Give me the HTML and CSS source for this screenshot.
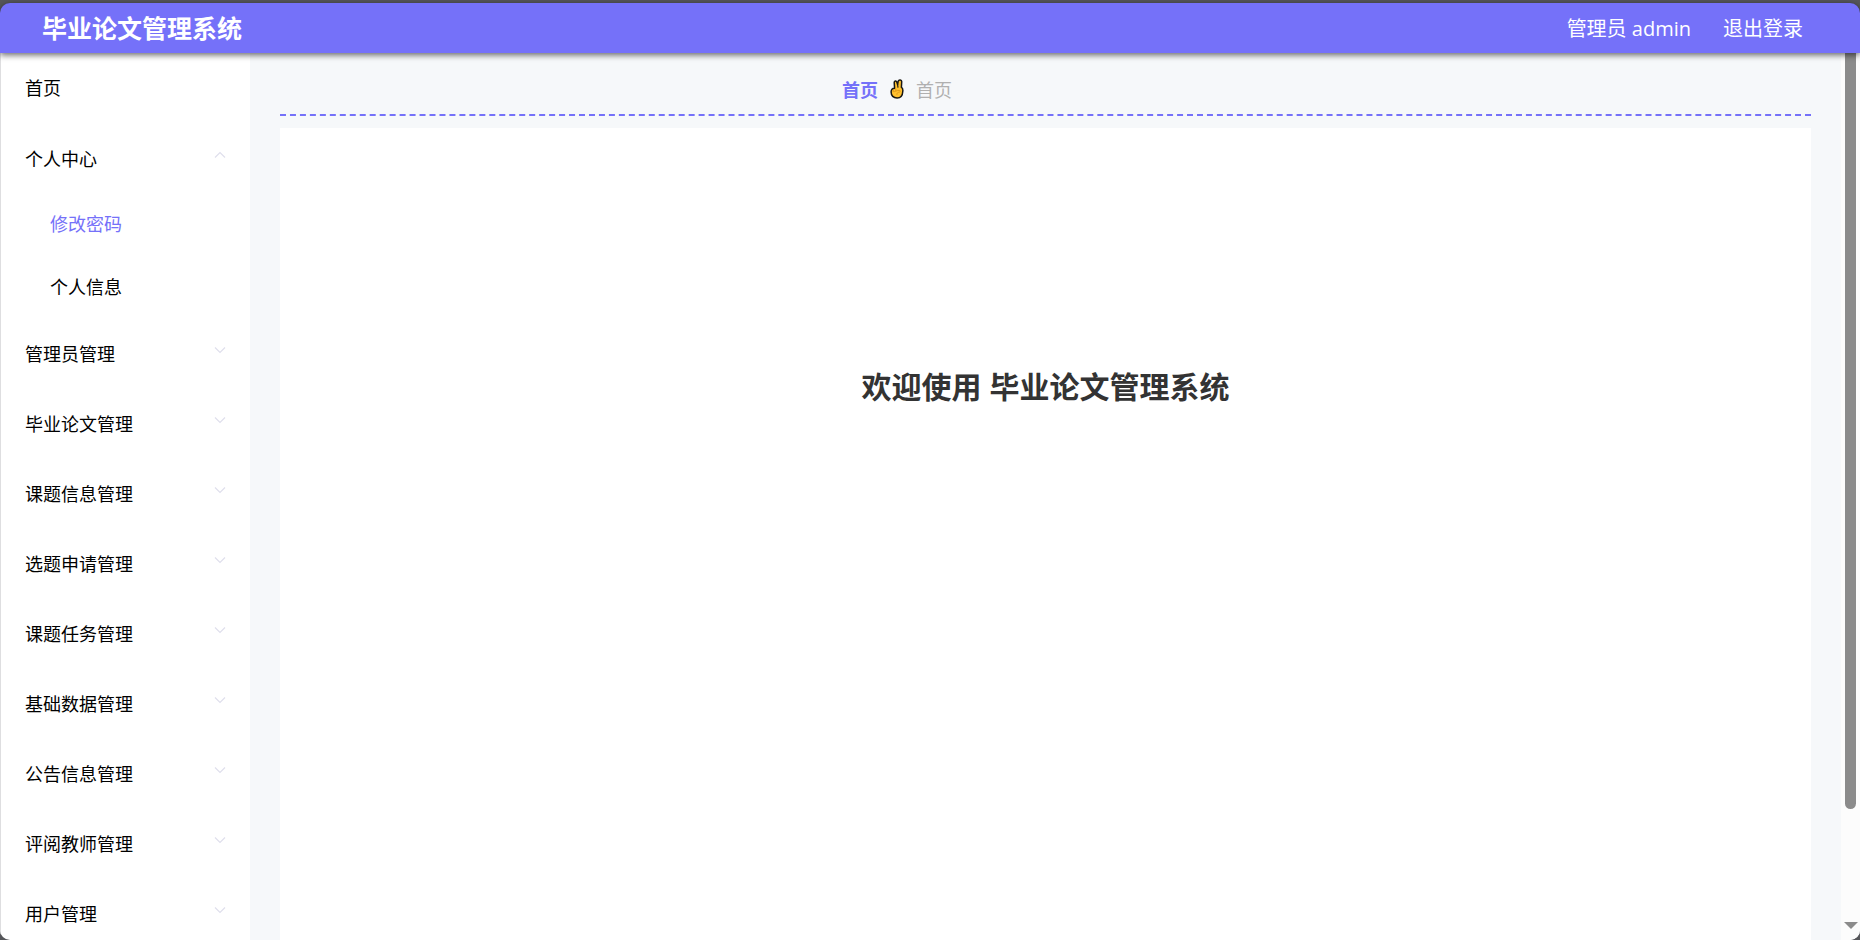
FILE: index.html
```
<!DOCTYPE html>
<html lang="zh-CN">
<head>
<meta charset="utf-8">
<title>毕业论文管理系统</title>
<link rel="stylesheet" href="styles.css">
</head>
<body>
<svg class="defs" aria-hidden="true">
  <symbol id="chevron" viewBox="0 0 12 8"><path d="M1 1.5L6 6.5L11 1.5" fill="none" stroke="currentColor" stroke-width="1.2"/></symbol>
</svg>
<div class="window">
  <header class="header">
    <h1 class="brand">毕业论文管理系统</h1>
    <div class="account">
      <span>管理员 admin</span>
      <button class="logout" type="button">退出登录</button>
    </div>
  </header>
  <div class="body">
    <nav class="sidebar">
      <a class="item" href="#">首页</a>
      <button class="item item-open" type="button" aria-expanded="true">个人中心<svg class="chevron"><use href="#chevron"/></svg></button>
      <div class="submenu">
        <a class="subitem active" href="#">修改密码</a>
        <a class="subitem" href="#">个人信息</a>
      </div>
      <button class="item" type="button">管理员管理<svg class="chevron"><use href="#chevron"/></svg></button>
      <button class="item" type="button">毕业论文管理<svg class="chevron"><use href="#chevron"/></svg></button>
      <button class="item" type="button">课题信息管理<svg class="chevron"><use href="#chevron"/></svg></button>
      <button class="item" type="button">选题申请管理<svg class="chevron"><use href="#chevron"/></svg></button>
      <button class="item" type="button">课题任务管理<svg class="chevron"><use href="#chevron"/></svg></button>
      <button class="item" type="button">基础数据管理<svg class="chevron"><use href="#chevron"/></svg></button>
      <button class="item" type="button">公告信息管理<svg class="chevron"><use href="#chevron"/></svg></button>
      <button class="item" type="button">评阅教师管理<svg class="chevron"><use href="#chevron"/></svg></button>
      <button class="item" type="button">用户管理<svg class="chevron"><use href="#chevron"/></svg></button>
    </nav>
    <main class="content">
      <div class="breadcrumb">
        <a class="crumb" href="#">首页</a>
        <svg class="hand" viewBox="0 0 14 20" aria-hidden="true">
          <path d="M4.6 9.2L4.2 3.4C4.2 1.7 6.3 1.5 6.8 3L7.6 5.6L8.2 2.2C8.8.3 11.8.6 11.7 2.7L11.4 8.3C12.8 9 13 10.4 12.8 12.2C12.6 16.6 10.6 19 7.1 19C3.4 19 1.1 16.7 1.1 13.1C1.1 10.6 2 9.3 4.6 9.2Z" fill="#ffc02e" stroke="#1a1813" stroke-width="1.5" stroke-linejoin="round"/>
          <path d="M7.6 5.6L8 8.6" fill="none" stroke="#1a1813" stroke-width="1.2"/>
          <path d="M3.4 10.8V12M5.8 10V12.2M2.6 12.6C5 13.2 7 10.8 9.8 11.5C11 12.1 10 13.1 8.5 13.3C7 13.7 6.8 15 7 16" fill="none" stroke="#e09a1c" stroke-width="1"/>
        </svg>
        <span class="current">首页</span>
      </div>
      <section class="card">
        <h2 class="welcome">欢迎使用 毕业论文管理系统</h2>
      </section>
    </main>
    <div class="scrollbar" aria-hidden="true">
      <div class="thumb"></div>
      <div class="arrow"></div>
    </div>
  </div>
</div>
</body>
</html>
```
FILE: styles.css
```
* {
  box-sizing: border-box;
}

body {
  margin: 0;
  background: #55565a;
  color: #000;
  font-family: "Open Sans", "Noto Sans CJK SC", sans-serif;
}

a {
  color: inherit;
  text-decoration: none;
}

button {
  padding: 0;
  border: 0;
  background: none;
  color: inherit;
  font: inherit;
  cursor: pointer;
}

.defs {
  display: none;
}

.window {
  display: flex;
  flex-direction: column;
  height: 100vh;
  border-top: 3px solid #55565a;
}

.header {
  display: flex;
  flex: none;
  align-items: center;
  justify-content: space-between;
  height: 50px;
  padding: 0 57px 0 42px;
  border-radius: 10px 10px 0 0;
  background: #7571f9;
  box-shadow: 0 2px 6px rgba(0, 0, 0, 0.6);
  color: #fff;
  z-index: 1;
}

.brand {
  margin: 0;
  font-size: 25px;
  line-height: 50px;
}

.account {
  display: flex;
  gap: 32px;
  padding-top: 2px;
  font-size: 20px;
  line-height: 48px;
}

.body {
  display: flex;
  flex: 1;
  min-height: 0;
  overflow: hidden;
  border-radius: 0 0 10px 10px;
  background: #fff;
}

.sidebar {
  flex: none;
  width: 250px;
  padding-top: 1px;
  overflow: hidden;
  border-left: 1px solid #dedee0;
}

.item {
  display: flex;
  align-items: center;
  justify-content: space-between;
  width: 100%;
  height: 66px;
  margin-bottom: 4px;
  padding: 0 24px;
  font-size: 18px;
  text-align: left;
}

.item-open {
  margin: 5px 0 0;
}

.item-open .chevron {
  transform: rotate(180deg);
}

.chevron {
  width: 12px;
  height: 8px;
  margin-bottom: 6px;
  color: #dfdfec;
}

.submenu {
  margin-bottom: 3px;
}

.subitem {
  display: flex;
  align-items: center;
  height: 63px;
  padding-left: 49px;
  font-size: 18px;
}

.active {
  color: #7571f9;
}

.content {
  display: flex;
  flex: 1;
  flex-direction: column;
  padding: 12px 30px 0;
  background: #f6f8fa;
}

.breadcrumb {
  display: flex;
  align-items: center;
  justify-content: center;
  gap: 12px;
  height: 51px;
  margin-bottom: 12px;
  padding: 0 297px 2px 0;
  border-bottom: 2px dashed #7571f9;
  font-size: 18px;
}

.crumb {
  color: #7571f9;
  font-weight: 700;
}

.hand {
  width: 14px;
  height: 20px;
}

.current {
  color: #b0b0b0;
}

.card {
  flex: 1;
  padding-top: 237px;
  background: #fff;
  text-align: center;
}

.welcome {
  margin: 0;
  color: #333;
  font-size: 30px;
  line-height: 44px;
}

.scrollbar {
  display: flex;
  flex: none;
  flex-direction: column;
  align-items: center;
  justify-content: space-between;
  width: 19px;
  padding-bottom: 11px;
  background: #fcfcfc;
}

.thumb {
  width: 11px;
  height: 86.3%;
  border-radius: 0 0 6px 6px;
  background: #8b8b8b;
}

.arrow {
  border: 7px solid transparent;
  border-top-color: #8b8b8b;
  border-bottom: 0;
}
```
